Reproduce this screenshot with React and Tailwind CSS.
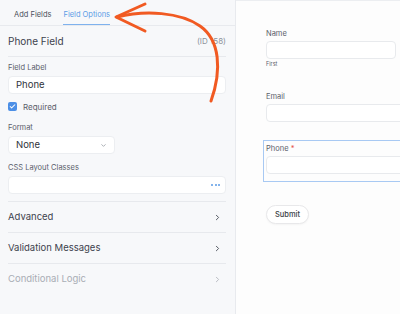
import React from "react";
import { ChevronRight, ChevronDown, Check } from "lucide-react";

const Label = ({ children, className = "" }) => (
  <div className={`text-[7.5px] leading-[10px] text-[#5b606b] ${className}`}>{children}</div>
);

const Row = ({ title, muted, last }) => (
  <div
    className={`h-[31px] flex items-center justify-between pr-[4px] ${
      last ? "" : "border-b border-[#e7e9ed]"
    }`}
  >
    <span className={`text-[9.5px] ${muted ? "text-[#a9adb5]" : "text-[#3d424d]"}`}>{title}</span>
    <ChevronRight size={9} strokeWidth={2.5} className={muted ? "text-[#b5b8bf]" : "text-[#4b505a]"} />
  </div>
);

const App = () => {
  return (
    <div className="w-[400px] h-[314px] flex relative overflow-hidden font-['Inter','Liberation_Sans',sans-serif]">
      {/* sidebar */}
      <aside className="w-[236px] shrink-0 bg-[#f7f8fa] border-r border-[#e8eaee] flex flex-col">
        <div className="h-[26px] border-b border-[#e8eaee] flex items-end gap-[12px] px-[14px]">
          <span className="text-[7.5px] text-[#4b505a] pb-[5px]">Add Fields</span>
          <span className="text-[7.5px] text-[#5b9be6] pb-[4px] border-b-[1.5px] border-[#7fb2ee]">
            Field Options
          </span>
        </div>

        <div className="pl-[8px] pr-[9px] flex flex-col">
          <div className="h-[31px] flex items-center justify-between border-b border-[#e7e9ed]">
            <span className="text-[10px] text-[#3d424d]">Phone Field</span>
            <span className="text-[8px] text-[#8d929b]">(ID 158)</span>
          </div>

          <Label className="mt-[6px]">Field Label</Label>
          <div className="mt-[3px] h-[18px] bg-white rounded-[4px] border border-[#eceef1] flex items-center px-[7px] text-[9.5px] text-[#2f333b]">
            Phone
          </div>

          <div className="mt-[8px] flex items-center gap-[6px] h-[9px]">
            <span className="w-[9px] h-[9px] rounded-[2px] bg-[#4c8fe6] flex items-center justify-center">
              <Check size={7} strokeWidth={3.5} className="text-white" />
            </span>
            <span className="text-[8px] text-[#5b606b]">Required</span>
          </div>

          <Label className="mt-[12px]">Format</Label>
          <div className="mt-[3px] h-[18px] w-[107px] bg-white rounded-[4px] border border-[#eceef1] flex items-center justify-between px-[7px] text-[9.5px] text-[#2f333b]">
            None
            <ChevronDown size={7} strokeWidth={2.5} className="text-[#8d929b]" />
          </div>

          <Label className="mt-[9px]">CSS Layout Classes</Label>
          <div className="mt-[3px] h-[18px] bg-white rounded-[4px] border border-[#eceef1] flex items-center justify-end px-[5px] gap-[1.5px]">
            <span className="w-[2px] h-[2px] rounded-full bg-[#5b9be6]" />
            <span className="w-[2px] h-[2px] rounded-full bg-[#5b9be6]" />
            <span className="w-[2px] h-[2px] rounded-full bg-[#5b9be6]" />
          </div>

          <div className="mt-[7px] border-t border-[#e7e9ed]">
            <Row title="Advanced" />
            <Row title="Validation Messages" />
            <Row title="Conditional Logic" muted last />
          </div>
        </div>
      </aside>

      {/* form preview */}
      <main className="flex-1 bg-[#fdfdfd] border-t border-[#eceef1] pl-[30px] pt-[28px] flex flex-col">
        <Label>Name</Label>
        <div className="mt-[2px] h-[18px] w-[130px] bg-white rounded-[4px] border border-[#e8eaed]" />
        <div className="mt-[1px] text-[5.5px] text-[#5b606b]">First</div>

        <Label className="mt-[24px]">Email</Label>
        <div className="mt-[2px] h-[18px] w-[150px] bg-white rounded-[4px] border border-[#e8eaed]" />

        <div className="mt-[18px] -ml-[3px] pl-[2px] w-[150px] h-[42px] border border-[#a8c9f3] pt-[3px]">
          <Label>
            Phone <span className="text-[#e5534b]">*</span>
          </Label>
          <div className="mt-[2px] h-[18px] bg-white rounded-[4px] border border-[#e8eaed]" />
        </div>

        <button className="mt-[23px] w-[43px] h-[19px] rounded-full bg-white border border-[#e8e8ea] shadow-[0_1px_2px_rgba(0,0,0,0.04)] text-[7.5px] font-medium text-[#3a3e46]">
          Submit
        </button>
      </main>

      {/* annotation arrow */}
      <svg className="absolute left-0 top-0 pointer-events-none" width="400" height="314" viewBox="0 0 400 314">
        <path
          d="M211 101 C222 70, 220 40, 200 26 C180 12, 145 10, 117 17"
          fill="none"
          stroke="#f15a22"
          strokeWidth="3"
          strokeLinecap="round"
        />
        <path
          d="M145 4 L116 17 L145 31"
          fill="none"
          stroke="#f15a22"
          strokeWidth="3"
          strokeLinecap="round"
          strokeLinejoin="round"
        />
      </svg>
    </div>
  );
};

export default App;
